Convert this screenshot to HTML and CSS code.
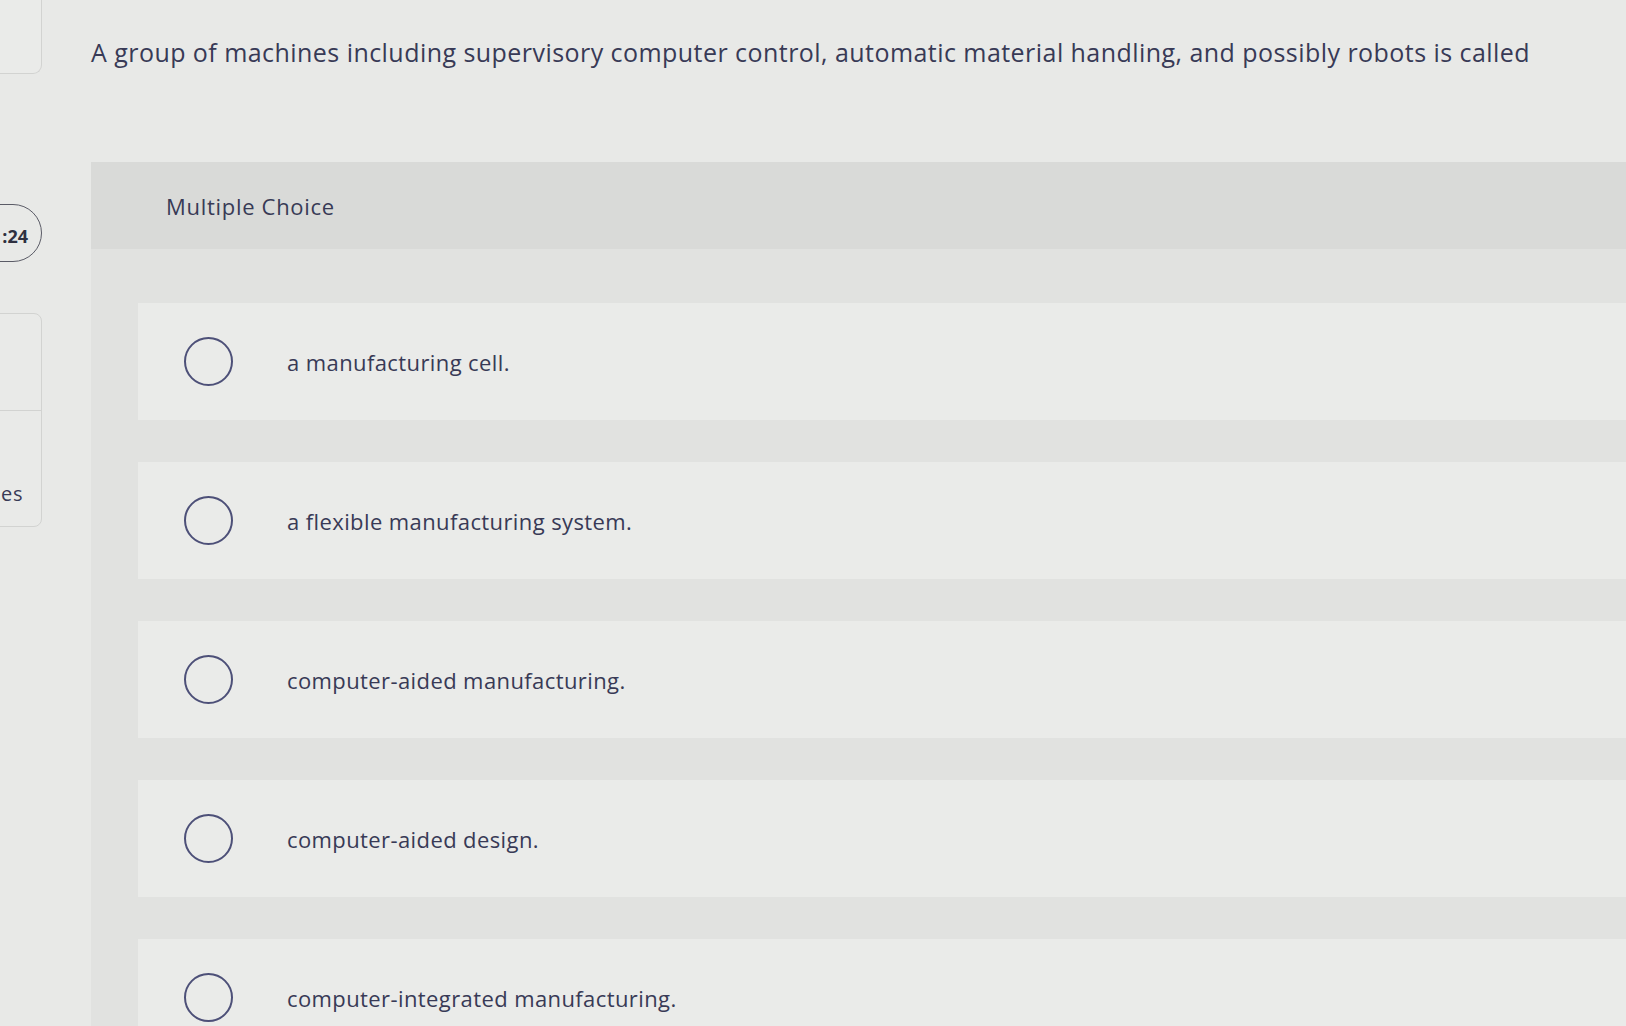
FILE: index.html
```html
<!DOCTYPE html>
<html>
<head>
<meta charset="utf-8">
<link rel="stylesheet" href="styles.css">
</head>
<body>
<aside class="sidebar">
  <div class="box-top"></div>
  <div class="timer">:24</div>
  <div class="box-nav">
    <div class="nav-cell"></div>
    <div class="nav-cell nav-label">es</div>
  </div>
</aside>
<main class="main">
  <p class="question">A group of machines including supervisory computer control, automatic material handling, and possibly robots is called</p>
  <section class="panel">
    <div class="panel-header">Multiple Choice</div>
    <div class="panel-body">
      <label class="option"><span class="radio"></span><span class="option-text">a manufacturing cell.</span></label>
      <label class="option"><span class="radio"></span><span class="option-text">a flexible manufacturing system.</span></label>
      <label class="option"><span class="radio"></span><span class="option-text">computer-aided manufacturing.</span></label>
      <label class="option"><span class="radio"></span><span class="option-text">computer-aided design.</span></label>
      <label class="option"><span class="radio"></span><span class="option-text">computer-integrated manufacturing.</span></label>
    </div>
  </section>
</main>
</body>
</html>
```
FILE: styles.css
```css
html, body {
  margin: 0;
  height: 100%;
  overflow: hidden;
}
body {
  background: #e8e9e7;
  font-family: "Open Sans", Lato, "Liberation Sans", sans-serif;
  color: #383a56;
  display: flex;
  align-items: flex-start;
}
.sidebar {
  width: 42px;
  flex: 0 0 42px;
  display: flex;
  flex-direction: column;
  align-items: flex-end;
}
.box-top {
  width: 80px;
  height: 76px;
  margin-top: -2px;
  border: 1px solid #d2d3d1;
  border-top: none;
  border-radius: 0 0 9px 9px;
  background: #eaebe9;
  box-sizing: border-box;
}
.timer {
  margin-top: 130px;
  width: 90px;
  height: 58px;
  box-sizing: border-box;
  border: 1.5px solid #5a5b66;
  border-radius: 29px;
  display: flex;
  align-items: center;
  justify-content: flex-end;
  padding: 6px 13px 0 0;
  font-weight: 700;
  font-size: 18px;
  color: #2f3040;
}
.box-nav {
  margin-top: 51px;
  width: 80px;
  height: 214px;
  box-sizing: border-box;
  border: 1px solid #d2d3d1;
  border-radius: 8px;
  background: #e9eae8;
  display: flex;
  flex-direction: column;
}
.nav-cell {
  flex: 1 1 0;
}
.nav-cell + .nav-cell {
  border-top: 1px solid #d2d3d1;
}
.nav-label {
  display: flex;
  align-items: flex-end;
  padding: 0 0 19px 38px;
  font-size: 20px;
  letter-spacing: 0.8px;
  color: #383a56;
}
.main {
  flex: 1;
  margin-left: 49px;
  min-width: 0;
}
.question {
  margin: 37px 0 0;
  font-size: 25px;
  line-height: 30px;
  letter-spacing: 0.45px;
  white-space: nowrap;
}
.panel {
  margin-top: 95px;
  background: #e1e2e0;
}
.panel-header {
  height: 87px;
  background: #d9dad8;
  padding-left: 75px;
  display: flex;
  align-items: center;
  font-size: 22px;
  letter-spacing: 0.7px;
  color: #383a56;
}
.panel-body {
  padding: 54px 0 0 47px;
  display: flex;
  flex-direction: column;
  gap: 42px;
}
.option {
  height: 117px;
  background: #eaebe9;
  display: flex;
  align-items: center;
  padding-left: 46px;
}
.radio {
  width: 49px;
  height: 49px;
  box-sizing: border-box;
  border: 2px solid #4d5078;
  border-radius: 50%;
  flex: 0 0 49px;
}
.option-text {
  margin-left: 54px;
  font-size: 22px;
  letter-spacing: 0.4px;
  color: #383a56;
}
```
